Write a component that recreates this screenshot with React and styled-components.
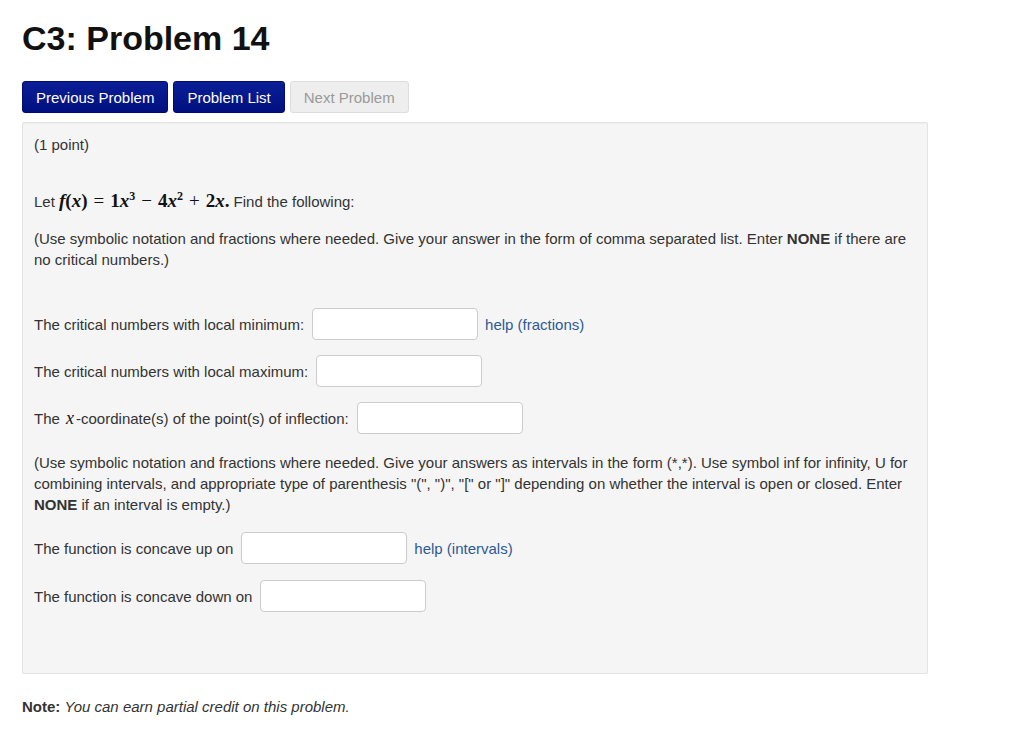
import React from 'react';
import styled, { createGlobalStyle } from 'styled-components';

const GlobalStyle = createGlobalStyle`
  body {
    margin: 0;
    background: #ffffff;
    font-family: "Liberation Sans", Arial, sans-serif;
    font-size: 15px;
    color: #333333;
  }
`;

const Page = styled.div`
  padding: 0 22px;
  width: 906px;
`;

const Title = styled.h1`
  font-size: 34px;
  font-weight: 700;
  color: #111111;
  margin: 20px 0 25px 0;
  line-height: 36px;
`;

const NavBar = styled.div`
  display: flex;
  gap: 5px;
  margin-bottom: 9px;
`;

const NavButton = styled.button`
  font-family: "Liberation Sans", Arial, sans-serif;
  font-size: 15px;
  height: 32px;
  padding: 0 13px;
  border-radius: 3px;
  cursor: ${p => (p.disabled ? 'default' : 'pointer')};
  color: ${p => (p.disabled ? '#9a9a9a' : '#ffffff')};
  background: ${p => (p.disabled ? '#eeeeee' : 'linear-gradient(#0a1e96, #00107f)')};
  border: 1px solid ${p => (p.disabled ? '#dddddd' : '#000c6e')};
`;

const Panel = styled.div`
  background: #f5f5f5;
  border: 1px solid #e3e3e3;
  border-radius: 2px;
  padding: 11px 10px 61px 11px;
  box-shadow: inset 0 1px 1px rgba(0, 0, 0, 0.03);
  line-height: 21px;
`;

const Points = styled.div`
  margin-bottom: 35px;
`;

const Para = styled.p`
  margin: 0 0 ${p => p.$after || 0}px 0;
`;

const Math = styled.span`
  font-family: "Liberation Serif", "DejaVu Serif", serif;
  font-weight: ${p => (p.$plain ? 400 : 700)};
  font-size: ${p => (p.$plain ? 18 : 19)}px;
  padding: 0 ${p => (p.$plain ? 2 : 0)}px;
  color: #111111;
  white-space: nowrap;
`;

const Var = styled.i`
  font-style: italic;
`;

const Sup = styled.sup`
  font-size: 12px;
  line-height: 0;
`;

const Op = styled.span`
  font-weight: 400;
  padding: 0 ${p => p.$space || 4}px;
`;

const Row = styled.div`
  display: flex;
  align-items: center;
  gap: 8px;
  height: 32px;
  margin-bottom: ${p => p.$after ?? 15}px;
`;

const Field = styled.input`
  width: 166px;
  height: 32px;
  box-sizing: border-box;
  border: 1px solid #cccccc;
  border-radius: 4px;
  background: #ffffff;
  padding: 4px 6px;
  font-size: 15px;
  margin-right: -1px;
`;

const Help = styled.a`
  color: #2d5a96;
  text-decoration: none;
  cursor: pointer;
`;

const Note = styled.p`
  margin: 23px 0 0 0;
  line-height: 20px;
`;

export default function App() {
  return (
    <Page>
      <GlobalStyle />
      <Title>C3: Problem 14</Title>
      <NavBar>
        <NavButton>Previous Problem</NavButton>
        <NavButton>Problem List</NavButton>
        <NavButton disabled>Next Problem</NavButton>
      </NavBar>

      <Panel>
        <Points>(1 point)</Points>
        <Para $after={16}>
          Let{' '}
          <Math>
            <Var>f</Var>(<Var>x</Var>)<Op $space={6}>=</Op>1<Var>x</Var>
            <Sup>3</Sup>
            <Op $space={6}>−</Op>4<Var>x</Var>
            <Sup>2</Sup>
            <Op $space={6}>+</Op>2<Var>x</Var>.
          </Math>{' '}
          Find the following:
        </Para>
        <Para $after={38}>
          (Use symbolic notation and fractions where needed. Give your answer in the form of comma separated list.
          Enter <b>NONE</b> if there are no critical numbers.)
        </Para>

        <Row>
          <span>The critical numbers with local minimum:</span>
          <Field />
          <Help>help (fractions)</Help>
        </Row>
        <Row>
          <span>The critical numbers with local maximum:</span>
          <Field />
        </Row>
        <Row $after={18}>
          <span>
            The{' '}
            <Math $plain>
              <Var>x</Var>
            </Math>
            -coordinate(s) of the point(s) of inflection:
          </span>
          <Field />
        </Row>

        <Para $after={17}>
          (Use symbolic notation and fractions where needed. Give your answers as intervals in the form (*,*). Use
          symbol inf for infinity, U for combining intervals, and appropriate type of parenthesis "(", ")", "[" or
          "]" depending on whether the interval is open or closed. Enter <b>NONE</b> if an interval is empty.)
        </Para>

        <Row $after={16}>
          <span>The function is concave up on</span>
          <Field />
          <Help>help (intervals)</Help>
        </Row>
        <Row $after={0}>
          <span>The function is concave down on</span>
          <Field />
        </Row>
      </Panel>

      <Note>
        <b>Note:</b> <i>You can earn partial credit on this problem.</i>
      </Note>
    </Page>
  );
}
